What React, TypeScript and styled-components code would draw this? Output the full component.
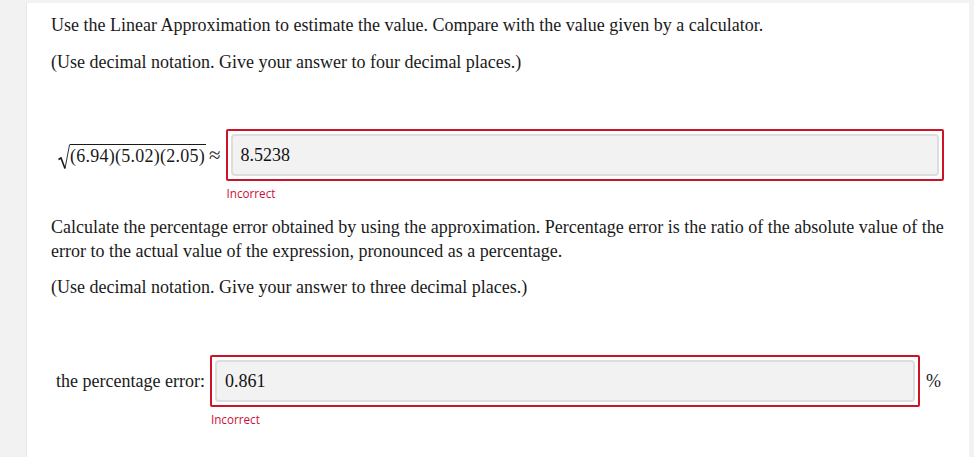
import React from 'react';
import styled, { createGlobalStyle } from 'styled-components';

const GlobalStyle = createGlobalStyle`
  html, body {
    margin: 0;
    padding: 0;
    background: #f2f2f2;
  }
`;

const Page = styled.div`
  padding: 3px 5px 0 26px;
  min-height: 454px;
`;

const Card = styled.div`
  background: #ffffff;
  border-left: 1px solid #e6e6e6;
  padding: 10px 25px 30px 24px;
  min-height: 414px;
  font-family: 'Liberation Serif', 'Times New Roman', serif;
  color: #1a1a1a;
`;

const Para = styled.p<{ $gap?: number }>`
  margin: 0 0 ${(p) => p.$gap ?? 13}px;
  font-size: 18px;
  line-height: 24px;
`;

const AnswerRow = styled.div<{ $top: number; $indent: number }>`
  display: flex;
  align-items: flex-start;
  margin-top: ${(p) => p.$top}px;
  margin-bottom: 14px;
  padding-left: ${(p) => p.$indent}px;
  font-size: 18px;
`;

const Label = styled.div<{ $gap: number }>`
  height: 52px;
  display: flex;
  align-items: center;
  white-space: nowrap;
  margin-right: ${(p) => p.$gap}px;
`;

const Radical = styled.span`
  display: inline-flex;
  align-items: flex-end;
  margin-right: 3px;
`;

const RootSign = styled.svg`
  width: 12px;
  height: 26px;
  display: block;
  margin-bottom: -4px;
`;

const Radicand = styled.span`
  border-top: 1px solid #1a1a1a;
  padding-top: 1px;
  padding-right: 1px;
  line-height: 20px;
  letter-spacing: 0.25px;
`;

const Approx = styled.span`
  font-size: 21px;
`;

const FieldColumn = styled.div`
  flex: 1;
  display: flex;
  flex-direction: column;
`;

const FieldLine = styled.div`
  display: flex;
  align-items: center;
`;

const RedFrame = styled.div`
  flex: 1;
  border: 2px solid #cc1429;
  border-radius: 2px;
  padding: 3px;
`;

const AnswerInput = styled.div`
  height: 38px;
  border: 2px solid #dddddd;
  border-radius: 4px;
  background: #f2f2f2;
  display: flex;
  align-items: center;
  padding-left: 8px;
  font-size: 18px;
  color: #111;
`;

const Unit = styled.span`
  flex: 0 0 18px;
  margin-left: 6px;
  font-size: 18px;
`;

const Feedback = styled.div`
  margin: 5px 0 0 1px;
  font-family: 'Open Sans', 'Liberation Sans', sans-serif;
  font-size: 11.7px;
  line-height: 15px;
  color: #cc1136;
`;

export default function App() {
  return (
    <>
      <GlobalStyle />
      <Page>
        <Card>
          <Para>
            Use the Linear Approximation to estimate the value. Compare with the value given by a calculator.
          </Para>
          <Para $gap={0}>(Use decimal notation. Give your answer to four decimal places.)</Para>

          <AnswerRow $top={55} $indent={7}>
            <Label $gap={5}>
              <Radical>
                <RootSign viewBox="0 0 12 26">
                  <path d="M0.5 15.5 L3 14 L7 24.5" fill="none" stroke="#1a1a1a" strokeWidth="1.6" />
                  <path d="M7 24.5 L11.5 0.8 L12 0.8" fill="none" stroke="#1a1a1a" strokeWidth="0.9" />
                </RootSign>
                <Radicand>(6.94)(5.02)(2.05)</Radicand>
              </Radical>
              <Approx>≈</Approx>
            </Label>
            <FieldColumn>
              <FieldLine>
                <RedFrame>
                  <AnswerInput>8.5238</AnswerInput>
                </RedFrame>
              </FieldLine>
              <Feedback>Incorrect</Feedback>
            </FieldColumn>
          </AnswerRow>

          <Para $gap={12}>
            Calculate the percentage error obtained by using the approximation. Percentage error is the ratio of the
            absolute value of the error to the actual value of the expression, pronounced as a percentage.
          </Para>
          <Para $gap={0}>(Use decimal notation. Give your answer to three decimal places.)</Para>

          <AnswerRow $top={56} $indent={5}>
            <Label $gap={5}>the percentage error:</Label>
            <FieldColumn>
              <FieldLine>
                <RedFrame>
                  <AnswerInput>0.861</AnswerInput>
                </RedFrame>
                <Unit>%</Unit>
              </FieldLine>
              <Feedback>Incorrect</Feedback>
            </FieldColumn>
          </AnswerRow>
        </Card>
      </Page>
    </>
  );
}
